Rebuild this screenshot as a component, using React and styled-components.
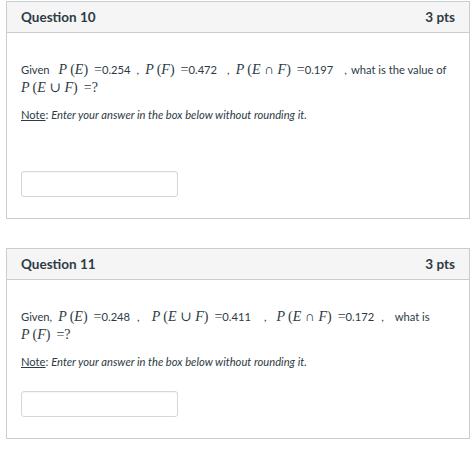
import React from 'react';
import styled, { createGlobalStyle } from 'styled-components';

const GlobalStyle = createGlobalStyle`
  html, body {
    margin: 0;
    padding: 0;
    background: #ffffff;
  }
  body {
    font-family: Lato, "Noto Sans", "Liberation Sans", sans-serif;
    color: #2d3b45;
  }
`;

const Page = styled.div`
  display: flex;
  flex-direction: column;
  gap: 29px;
  padding: 1px 4px 0 6px;
  width: 464px;
`;

const Card = styled.div`
  border: 1px solid #c7cdd1;
  background: #ffffff;
`;

const Header = styled.div`
  display: flex;
  justify-content: space-between;
  align-items: center;
  height: 30px;
  padding: 0 14px;
  background: #f5f5f5;
  border-bottom: 1px solid #c7cdd1;
  font-size: 13.5px;
  font-weight: 700;
  color: #2d3b45;
`;

const Body = styled.div`
  padding: 28px 14px 21px 14px;
`;

const Text = styled.p`
  margin: 0;
  font-size: 11.2px;
  line-height: 18px;
  color: #2d3b45;
  white-space: nowrap;
`;

const Note = styled.p`
  margin: 9px 0 0 0;
  font-size: 11.2px;
  line-height: 18px;
  color: #2d3b45;
`;

const NoteLabel = styled.span`
  text-decoration: underline;
`;

const NoteText = styled.em`
  font-style: italic;
`;

const MathSpan = styled.span`
  font-family: "Liberation Serif", "DejaVu Serif", serif;
  font-size: 14px;
  margin-left: ${(p) => p.$left || 0}px;
`;

const Var = styled.i`
  font-style: italic;
  font-family: "Liberation Serif", serif;
`;

const Paren = styled.span`
  margin-left: ${(p) => p.$left || 0}px;
`;

const Sep = styled.span`
  display: inline-block;
  margin: 0 ${(p) => p.$right}px 0 ${(p) => p.$left}px;
`;

const InputWrap = styled.div`
  margin-top: ${(p) => p.$top}px;
`;

const Answer = styled.input`
  display: block;
  box-sizing: border-box;
  width: 157px;
  height: 26px;
  border: 1px solid #d3d7da;
  border-radius: 3px;
  background: #ffffff;
  box-shadow: inset 0 1px 1px rgba(0, 0, 0, 0.04);
  outline: none;
`;

const Prob = ({ children, left }) => (
  <MathSpan $left={left}>
    <Var>P</Var>
    <Paren $left={3}>(</Paren>
    {children}
    <span>)</span>
  </MathSpan>
);

const Eq = ({ value }) => (
  <>
    <MathSpan $left={6}>=</MathSpan>
    {value}
  </>
);

const Question = ({ title, children, inputTop }) => (
  <Card>
    <Header>
      <span>{title}</span>
      <span>3 pts</span>
    </Header>
    <Body>
      {children}
      <Note>
        <NoteLabel>Note</NoteLabel>: <NoteText>Enter your answer in the box below without rounding it.</NoteText>
      </Note>
      <InputWrap $top={inputTop}>
        <Answer type="text" />
      </InputWrap>
    </Body>
  </Card>
);

const App = () => (
  <>
    <GlobalStyle />
    <Page>
      <Question title="Question 10" inputTop={47}>
        <Text>
          Given
          <Prob left={9}><Var>E</Var></Prob>
          <Eq value="0.254" />
          <Sep $left={6} $right={6}>,</Sep>
          <Prob><Var>F</Var></Prob>
          <Eq value="0.472" />
          <Sep $left={10} $right={6}>,</Sep>
          <Prob><Var>E</Var> ∩ <Var>F</Var></Prob>
          <Eq value="0.197" />
          <Sep $left={11} $right={4}>,</Sep>
          what is the value of
        </Text>
        <Text>
          <Prob><Var>E</Var> ∪ <Var>F</Var></Prob>
          <MathSpan $left={6}>=?</MathSpan>
        </Text>
      </Question>
      <Question title="Question 11" inputTop={20}>
        <Text>
          Given,
          <Prob left={6}><Var>E</Var></Prob>
          <Eq value="0.248" />
          <Sep $left={7} $right={12}>,</Sep>
          <Prob><Var>E</Var> ∪ <Var>F</Var></Prob>
          <Eq value="0.411" />
          <Sep $left={13} $right={10}>,</Sep>
          <Prob><Var>E</Var> ∩ <Var>F</Var></Prob>
          <Eq value="0.172" />
          <Sep $left={7} $right={11}>,</Sep>
          what is
        </Text>
        <Text>
          <Prob><Var>F</Var></Prob>
          <MathSpan $left={6}>=?</MathSpan>
        </Text>
      </Question>
    </Page>
  </>
);

export default App;
